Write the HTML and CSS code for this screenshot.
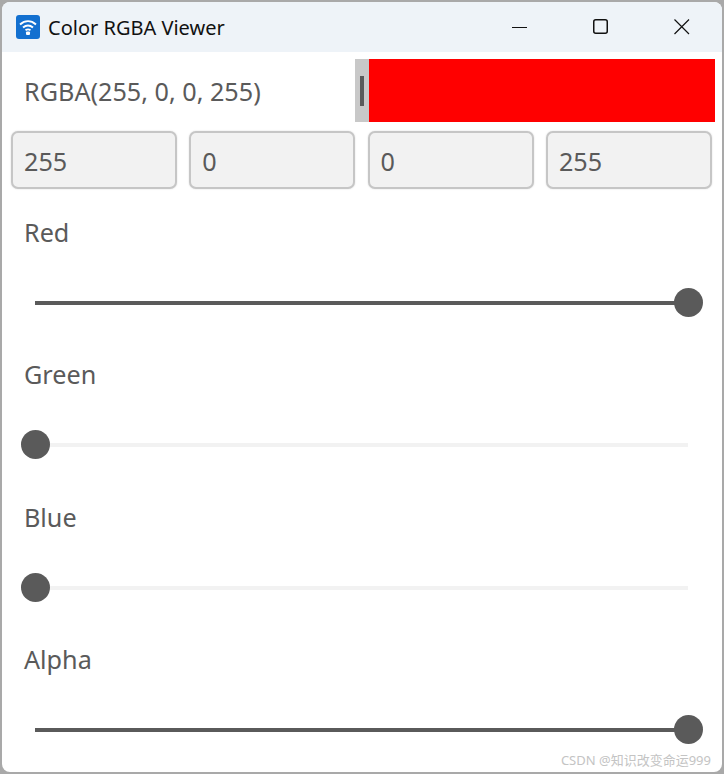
FILE: index.html
```html
<!DOCTYPE html>
<html lang="en">
<head>
    <meta charset="UTF-8">
    <title>Color RGBA Viewer</title>
    <link rel="stylesheet" href="styles.css">
</head>
<body>
    <div class="window">
        <div class="titlebar">
            <svg class="app-icon" width="24" height="24" viewBox="0 0 24 24">
                <rect width="24" height="24" rx="3" fill="#1370d0"/>
                <path d="M4 9.500C9 5.200 15 5.200 20 9.500" fill="none" stroke="#fff" stroke-width="2"/>
                <path d="M7 12.500C10 10 14 10 17 12.500" fill="none" stroke="#fff" stroke-width="2"/>
                <path d="M9.500 15.300C11 14.200 13 14.200 14.500 15.300" fill="none" stroke="#fff" stroke-width="1.800"/>
                <rect x="10" y="16.500" width="4" height="3.500" rx="1" fill="#fff"/>
            </svg>
            <span class="title">Color RGBA Viewer</span>
            <div class="controls">
                <svg width="16" height="16" viewBox="0 0 16 16"><path d="M0 8.500H15" stroke="#111" stroke-width="1" fill="none"/></svg>
                <svg width="16" height="16" viewBox="0 0 16 16"><rect x="0.750" y="0.750" width="13.500" height="13.500" rx="2" stroke="#111" stroke-width="1.500" fill="none"/></svg>
                <svg width="16" height="16" viewBox="0 0 16 16"><path d="M0.500 0.500L15 15M15 0.500L0.500 15" stroke="#111" stroke-width="1.200" fill="none"/></svg>
            </div>
        </div>
        <div class="content">
            <div class="top-row">
                <div class="rgba-text">RGBA(255, 0, 0, 255)</div>
                <div class="swatch-box">
                    <div class="scrollbar"><div class="scroll-thumb"></div></div>
                    <div class="swatch"></div>
                </div>
            </div>
            <div class="inputs">
                <input class="num" type="text" value="255">
                <input class="num" type="text" value="0">
                <input class="num" type="text" value="0">
                <input class="num" type="text" value="255">
            </div>
            <div class="channel">
                <div class="label">Red</div>
                <div class="track full"><div class="knob at-max"></div></div>
            </div>
            <div class="channel">
                <div class="label">Green</div>
                <div class="track"><div class="knob"></div></div>
            </div>
            <div class="channel">
                <div class="label">Blue</div>
                <div class="track"><div class="knob"></div></div>
            </div>
            <div class="channel">
                <div class="label">Alpha</div>
                <div class="track full"><div class="knob at-max"></div></div>
            </div>
        </div>
        <div class="watermark">CSDN @知识改变命运999</div>
    </div>
</body>
</html>
```

FILE: styles.css
```css
* {
    margin: 0;
    padding: 0;
    box-sizing: border-box;
}
html, body {
    height: 100%;
}
body {
    background-color: #a9a9a9;
    font-family: "Noto Sans", "Open Sans", sans-serif;
    padding: 2px;
    overflow: hidden;
}
.window {
    position: relative;
    height: 770px;
    background-color: #fff;
    border-radius: 8px;
    overflow: hidden;
}
.titlebar {
    height: 50px;
    background-color: #eef3f8;
    display: flex;
    align-items: center;
    padding-left: 14px;
}
.app-icon {
    margin-right: 8px;
}
.title {
    font-size: 20px;
    color: #111;
}
.controls {
    margin-left: auto;
    display: flex;
    gap: 65px;
    padding-right: 32px;
}
.content {
    color: #5a5a5a;
}
.top-row {
    display: flex;
    height: 63px;
    margin-top: 7px;
    padding-right: 7px;
    align-items: stretch;
}
.rgba-text {
    width: 353px;
    padding-left: 22px;
    font-size: 25.200px;
    line-height: 65px;
}
.swatch-box {
    flex: 1;
    display: flex;
}
.scrollbar {
    width: 14px;
    background-color: #c8c8c8;
    display: flex;
    align-items: center;
    padding-left: 5px;
}
.scroll-thumb {
    width: 4px;
    height: 30px;
    background-color: #5a5a5a;
}
.swatch {
    flex: 1;
    background-color: #f00;
}
.inputs {
    display: grid;
    grid-template-columns: repeat(4, 166px);
    column-gap: 12.300px;
    padding: 9px 0 0 9px;
}
.num {
    height: 58px;
    background-color: #f2f2f2;
    border: 2px solid #c6c6c6;
    border-radius: 7px;
    box-shadow: 0 0 2px #ddd;
    padding: 1px 0 0 11px;
    font-family: inherit;
    font-size: 25.200px;
    color: #5a5a5a;
    outline: none;
}
.channel {
    height: 142.300px;
    padding: 22px 0 0 22px;
}
.label {
    font-size: 25.200px;
    line-height: 42px;
}
.track {
    position: relative;
    margin: 48px 0 0 11px;
    width: 653px;
    height: 4px;
    background-color: #f2f2f2;
}
.track.full {
    background-color: #5a5a5a;
}
.knob {
    position: absolute;
    top: -13px;
    left: -14px;
    width: 29px;
    height: 29px;
    border-radius: 50%;
    background-color: #5a5a5a;
}
.knob.at-max {
    left: 639px;
}
.watermark {
    position: absolute;
    right: 11px;
    bottom: 3px;
    font-family: "Noto Sans", "Noto Sans CJK SC", sans-serif;
    font-size: 13px;
    color: #c4c4c4;
}
```
